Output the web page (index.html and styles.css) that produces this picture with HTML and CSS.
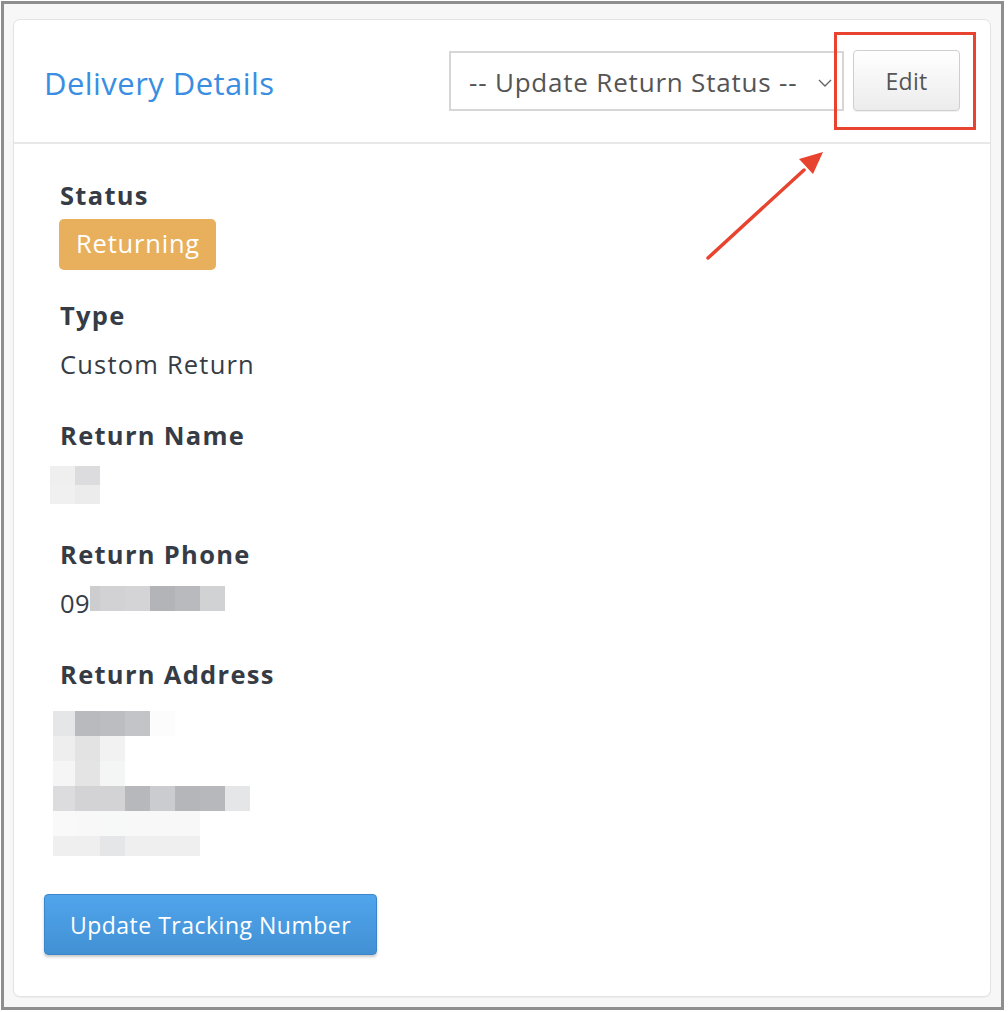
FILE: index.html
```html
<!DOCTYPE html>
<html>
<head>
<meta charset="utf-8">
<link rel="stylesheet" href="styles.css">
</head>
<body>
<div class="frame">
  <div class="card">
    <div class="card-header">
      <h2 class="title">Delivery Details</h2>
      <div class="actions">
        <div class="select">
          <span>-- Update Return Status --</span>
          <svg class="chev" width="14" height="9" viewBox="0 0 14 9"><path d="M1 1 L7 7 L13 1" fill="none" stroke="#666" stroke-width="1.4"/></svg>
        </div>
        <button class="btn-edit">Edit</button>
      </div>
    </div>
    <div class="card-body">
      <div class="fields">
        <div class="field">
          <div class="label">Status</div>
          <div class="value"><span class="badge">Returning</span></div>
        </div>
        <div class="field">
          <div class="label">Type</div>
          <div class="value">Custom Return</div>
        </div>
        <div class="field">
          <div class="label">Return Name</div>
          <div class="value">
            <div class="mosaic name">
              <i class="g-ef"></i><i class="g-dc"></i>
              <i class="g-f0"></i><i class="g-ec"></i>
            </div>
          </div>
        </div>
        <div class="field">
          <div class="label">Return Phone</div>
          <div class="value phone">09<span class="phone-blur"><i class="narrow g-cd"></i><i class="g-d2"></i><i class="g-d4"></i><i class="g-b3"></i><i class="g-b9"></i><i class="g-d1"></i></span></div>
        </div>
        <div class="field last">
          <div class="label">Return Address</div>
          <div class="value addr">
            <div class="mosaic address">
              <i class="first g-e5"></i><i class="g-b9"></i><i class="g-bc"></i><i class="g-c3"></i><i class="g-fc"></i><i></i><i></i><i></i>
              <i class="first g-ee"></i><i class="g-e3"></i><i class="g-f2"></i><i></i><i></i><i></i><i></i><i></i>
              <i class="first g-f5"></i><i class="g-e4"></i><i class="g-f4"></i><i></i><i></i><i></i><i></i><i></i>
              <i class="first g-dc"></i><i class="g-d3"></i><i class="g-d3"></i><i class="g-b7"></i><i class="g-cb"></i><i class="g-b5"></i><i class="g-b7"></i><i class="g-e5"></i>
              <i class="first g-f9"></i><i class="g-f8"></i><i class="g-f7"></i><i class="g-f8"></i><i class="g-f8"></i><i class="g-f8"></i><i></i><i></i>
              <i class="first g-ef"></i><i class="g-ef"></i><i class="g-e5"></i><i class="g-ef"></i><i class="g-ef"></i><i class="g-ef"></i><i></i><i></i>
            </div>
          </div>
        </div>
      </div>
      <button class="btn-primary">Update Tracking Number</button>
    </div>
    <div class="highlight"></div>
    <svg class="arrow" width="140" height="120" viewBox="0 0 140 120">
      <line x1="4" y1="112" x2="100" y2="24" stroke="#e8432e" stroke-width="3.5" stroke-linecap="round"/>
      <polygon points="119,6 95,13 109,28" fill="#e8432e"/>
    </svg>
  </div>
</div>
</body>
</html>
```

FILE: styles.css
```css
* { box-sizing: border-box; }
html, body { margin: 0; padding: 0; background: #fff; }
body { font-family: "Open Sans", "Liberation Sans", sans-serif; }

.frame {
  margin: 1px 4px 2px 1px;
  height: 1009px;
  border: 3px solid #8e8e8e;
  background: #f7f7f7;
  padding: 15px 10px 9px 9px;
}

.card {
  position: relative;
  height: 978px;
  background: #fff;
  border: 1px solid #e3e3e3;
  border-radius: 7px;
  box-shadow: 0 1px 1px rgba(0,0,0,0.04);
}

.card-header {
  height: 124px;
  border-bottom: 2px solid #e8e8e8;
  display: flex;
  align-items: center;
  justify-content: space-between;
  padding: 0 30px 0 30px;
}

.title {
  margin: 4px 0 0 0;
  font-weight: 400;
  font-size: 31px;
  letter-spacing: 0.45px;
  color: #3a8ee2;
}

.actions { display: flex; align-items: center; gap: 9px; margin-top: -1px; }

.select {
  width: 395px;
  height: 60px;
  border: 2px solid #d6d6d6;
  background: #fff;
  display: flex;
  align-items: center;
  justify-content: space-between;
  padding: 0 10px 0 18px;
  font-size: 26px;
  letter-spacing: 0.8px;
  color: #555;
}
.select span { margin-top: 2px; }
.chev { margin-top: 6px; }

.btn-edit {
  width: 107px;
  height: 61px;
  border: 1px solid #cfcfcf;
  border-radius: 4px;
  background: linear-gradient(#ffffff, #ececec);
  font-family: "Open Sans", "Liberation Sans", sans-serif;
  font-size: 23px;
  letter-spacing: 0.3px;
  color: #555;
  padding: 0;
  box-shadow: 0 1px 1px rgba(0,0,0,0.06);
}

.card-body { padding: 33px 30px 0 30px; }

.fields { padding-left: 16px; }

.field { margin-bottom: 35px; }
.field.last { margin-bottom: 0; }

.label {
  font-weight: 700;
  font-size: 25.5px;
  line-height: 36px;
  letter-spacing: 1.3px;
  color: #363c45;
}

.value {
  margin-top: 13px;
  font-size: 25.5px;
  line-height: 36px;
  letter-spacing: 1.2px;
  color: #363c45;
}

.badge {
  display: inline-block;
  height: 51px;
  line-height: 49px;
  margin: -7px 0 -8px -1px;
  padding: 0 16px 0 17px;
  background: #e8b05c;
  color: #fff;
  border-radius: 5px;
  font-size: 25.5px;
  letter-spacing: 0.8px;
  vertical-align: top;
}

.mosaic { display: grid; }
.mosaic i { display: block; }
.mosaic.name {
  grid-template-columns: 25px 25px;
  grid-auto-rows: 19px;
  margin-left: -10px;
  margin-bottom: -3px;
}

.phone { display: flex; align-items: flex-start; height: 36px; letter-spacing: 0.5px; }
.phone-blur { display: flex; margin-top: 1px; }
.phone-blur i { display: block; width: 25px; height: 25px; }
.phone-blur i.narrow { width: 10px; }

.addr { margin-top: 19px; }
.mosaic.address {
  grid-template-columns: 22px repeat(7, 25px);
  grid-template-rows: 25px 25px 25px 25px 25px 20px;
  margin-left: -7px;
}

.g-b3 { background: #b3b4b7; }
.g-b5 { background: #b5b6b9; }
.g-b7 { background: #b7b8bb; }
.g-b9 { background: #b9babd; }
.g-bc { background: #bcbdc0; }
.g-c3 { background: #c3c4c7; }
.g-cb { background: #cbcccf; }
.g-cd { background: #cdcdcf; }
.g-d1 { background: #d1d2d4; }
.g-d2 { background: #d2d2d4; }
.g-d3 { background: #d3d3d5; }
.g-d4 { background: #d4d4d6; }
.g-dc { background: #dcdcde; }
.g-e3 { background: #e3e3e4; }
.g-e4 { background: #e4e4e5; }
.g-e5 { background: #e5e6e8; }
.g-ec { background: #ececec; }
.g-ee { background: #eeeeee; }
.g-ef { background: #efefef; }
.g-f0 { background: #f0f0f0; }
.g-f2 { background: #f2f2f2; }
.g-f4 { background: #f4f5f5; }
.g-f5 { background: #f5f5f5; }
.g-f7 { background: #f7f8f8; }
.g-f8 { background: #f8f8f8; }
.g-f9 { background: #f9f9f9; }
.g-fc { background: #fcfcfc; }

.btn-primary {
  margin-top: 38px;
  width: 333px;
  height: 61px;
  border: 1px solid #3b86c8;
  border-radius: 4px;
  background: linear-gradient(#50a5ec, #4290d4);
  color: #fff;
  font-family: "Open Sans", "Liberation Sans", sans-serif;
  font-size: 23px;
  letter-spacing: 0.5px;
  padding: 0;
  box-shadow: 0 2px 3px rgba(0,0,0,0.22);
}

.highlight {
  position: absolute;
  left: 820px;
  top: 12px;
  width: 142px;
  height: 98px;
  border: 3px solid #e8432e;
}

.arrow {
  position: absolute;
  left: 690px;
  top: 126px;
}
```
